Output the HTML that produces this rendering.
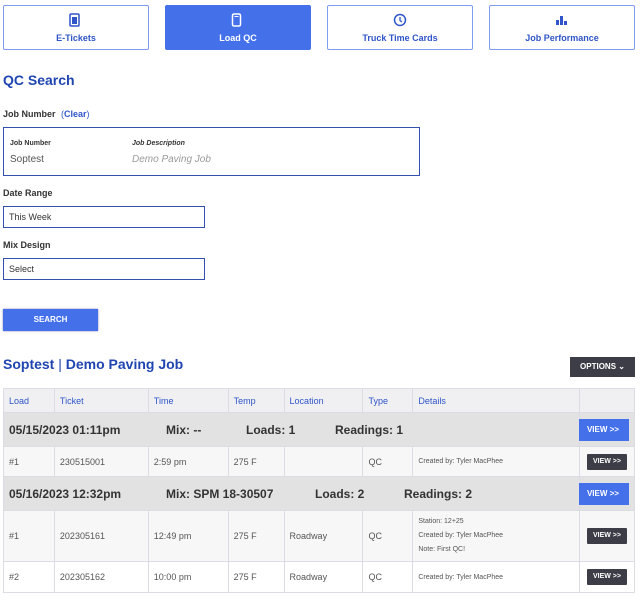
<!DOCTYPE html>
<html><head><meta charset="utf-8"><style>
*{box-sizing:border-box;margin:0;padding:0}
body{width:640px;height:600px;background:#fff;font-family:"Liberation Sans",Arial,sans-serif;position:relative;overflow:hidden;color:#333}
.a{position:absolute}
.tab{position:absolute;top:5px;height:45px;width:146px;border:1px solid #7f9cf0;border-radius:2px;background:#fff;color:#2f55c8;font-size:9px;font-weight:bold;text-align:center}
.tab .t{position:absolute;top:27px;left:0;right:0}
.tab svg{position:absolute;top:7px;left:65px}
.on{background:#4470ea;color:#fff;border-color:#4470ea}
h2{font-size:14px;color:#1f45b0;font-weight:bold}
.lbl{font-size:9px;font-weight:bold;color:#333}
.inp{border:1px solid #3150b0;font-size:9px;color:#333;padding-left:5px;background:#fff}
table{position:absolute;left:3px;top:388px;border-collapse:collapse;width:632px;font-size:9px}
td{border:1px solid #dcdce4;color:#555;padding-left:5px;background:#f7f7f7}
tr.h td{background:#f0f0f2;color:#2f55c8;height:24px}
tr.g td{background:#e2e2e2;color:#333;font-weight:bold;font-size:12px;height:34px}
tr.w td{background:#fff}
.vb{display:inline-block;background:#3d3d47;color:#fff;font-size:7px;font-weight:bold;width:40px;height:16px;line-height:16px;text-align:center;border-radius:1px}
.vbb{display:inline-block;background:#4470ea;color:#fff;font-size:8px;font-weight:bold;width:52px;height:22px;line-height:22px;text-align:center}
</style></head><body>
<div class="tab" style="left:3px"><svg width="12" height="14" viewBox="0 0 12 14"><rect x="1" y="1" width="9" height="12" rx="1" fill="none" stroke="#2f55c8" stroke-width="1.5"/><rect x="3" y="4" width="5" height="7" fill="#2f55c8"/></svg><div class="t">E-Tickets</div></div>
<div class="tab on" style="left:165px"><svg width="12" height="14" viewBox="0 0 12 14"><rect x="1.5" y="1" width="8" height="12" rx="1.5" fill="none" stroke="#fff" stroke-width="1.5"/><rect x="3.5" y="3" width="4" height="1" fill="#fff"/></svg><div class="t">Load QC</div></div>
<div class="tab" style="left:327px"><svg width="14" height="14" viewBox="0 0 14 14"><circle cx="7" cy="7" r="5.5" fill="none" stroke="#2f55c8" stroke-width="1.5"/><path d="M7 4v3.5l2 1.5" fill="none" stroke="#2f55c8" stroke-width="1.3"/></svg><div class="t">Truck Time Cards</div></div>
<div class="tab" style="left:489px"><svg width="14" height="14" viewBox="0 0 14 14"><rect x="1" y="7" width="3" height="5" fill="#2f55c8"/><rect x="5" y="3" width="3" height="9" fill="#2f55c8"/><rect x="9" y="8" width="3" height="4" fill="#2f55c8"/></svg><div class="t">Job Performance</div></div>

<h2 class="a" style="left:3px;top:72px">QC Search</h2>
<div class="a lbl" style="left:3px;top:109px">Job Number <span style="color:#2f55c8;margin-left:3px;font-weight:normal">(<b>Clear</b>)</span></div>
<div class="a" style="left:3px;top:127px;width:417px;height:49px;border:1px solid #3150b0">
<div class="a" style="left:6px;top:12px;font-size:7px;font-weight:bold;color:#333">Job Number</div>
<div class="a" style="left:6px;top:26px;font-size:10px;color:#555">Soptest</div>
<div class="a" style="left:128px;top:12px;font-size:7px;font-weight:bold;font-style:italic;color:#333">Job Description</div>
<div class="a" style="left:128px;top:26px;font-size:10px;font-style:italic;color:#999">Demo Paving Job</div>
</div>
<div class="a lbl" style="left:3px;top:188px">Date Range</div>
<div class="a inp" style="left:3px;top:206px;width:202px;height:22px;line-height:20px">This Week</div>
<div class="a lbl" style="left:3px;top:240px">Mix Design</div>
<div class="a inp" style="left:3px;top:258px;width:202px;height:22px;line-height:20px">Select</div>
<div class="a" style="left:3px;top:309px;width:95px;height:22px;background:#4470ea;color:#fff;font-size:8px;font-weight:bold;text-align:center;line-height:22px;box-shadow:0 0 2px #88a">SEARCH</div>

<h2 class="a" style="left:3px;top:356px">Soptest <span style="font-weight:normal">|</span> Demo Paving Job</h2>
<div class="a" style="left:570px;top:357px;width:65px;height:20px;background:#3d3d47;color:#fff;font-size:8px;font-weight:bold;text-align:center;line-height:20px">OPTIONS ⌄</div>

<table>
<colgroup><col style="width:51px"><col style="width:94px"><col style="width:80px"><col style="width:56px"><col style="width:79px"><col style="width:50px"><col style="width:167px"><col style="width:55px"></colgroup>
<tr class="h"><td>Load</td><td>Ticket</td><td>Time</td><td>Temp</td><td>Location</td><td>Type</td><td>Details</td><td></td></tr>
<tr class="g"><td colspan="7" style="position:relative"><span>05/15/2023 01:11pm</span><span class="a" style="left:162px;top:10px">Mix: --</span><span class="a" style="left:242px;top:10px">Loads: 1</span><span class="a" style="left:331px;top:10px">Readings: 1</span></td><td style="padding-left:0;text-align:left"><span class="vbb" style="margin-left:-3px">VIEW &gt;&gt;</span></td></tr>
<tr><td style="height:30px">#1</td><td>230515001</td><td>2:59 pm</td><td>275 F</td><td></td><td>QC</td><td style="font-size:7px">Created by: Tyler MacPhee</td><td style="padding-left:0;text-align:center"><span class="vb">VIEW &gt;&gt;</span></td></tr>
<tr class="g"><td colspan="7" style="position:relative"><span>05/16/2023 12:32pm</span><span class="a" style="left:162px;top:10px">Mix: SPM 18-30507</span><span class="a" style="left:311px;top:10px">Loads: 2</span><span class="a" style="left:400px;top:10px">Readings: 2</span></td><td style="padding-left:0;text-align:left"><span class="vbb" style="margin-left:-3px">VIEW &gt;&gt;</span></td></tr>
<tr><td style="height:51px">#1</td><td>202305161</td><td>12:49 pm</td><td>275 F</td><td>Roadway</td><td>QC</td><td style="font-size:7px;line-height:14px">Station: 12+25<br>Created by: Tyler MacPhee<br>Note: First QC!</td><td style="padding-left:0;text-align:center"><span class="vb">VIEW &gt;&gt;</span></td></tr>
<tr class="w"><td style="height:31px">#2</td><td>202305162</td><td>10:00 pm</td><td>275 F</td><td>Roadway</td><td>QC</td><td style="font-size:7px">Created by: Tyler MacPhee</td><td style="padding-left:0;text-align:center"><span class="vb">VIEW &gt;&gt;</span></td></tr>
</table>
</body></html>
